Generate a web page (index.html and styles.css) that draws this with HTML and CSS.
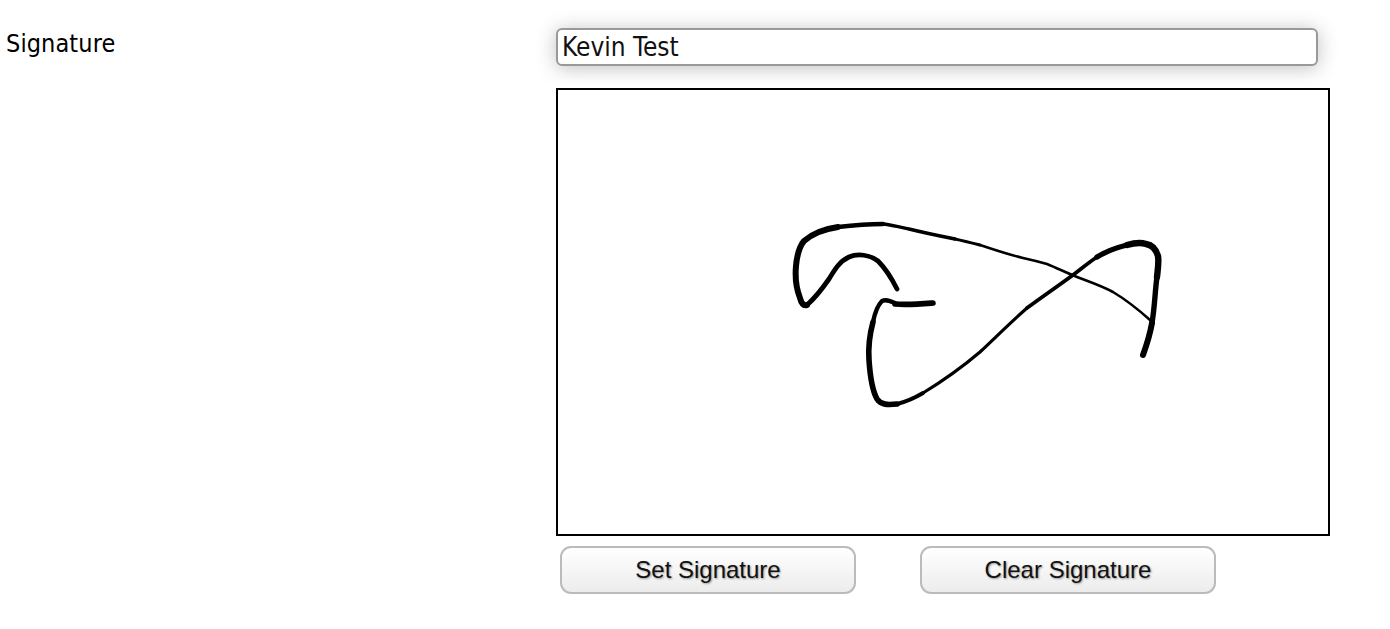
FILE: index.html
```html
<!DOCTYPE html>
<html lang="en">
<head>
    <meta charset="UTF-8">
    <title>Signature</title>
    <link rel="stylesheet" href="styles.css">
</head>
<body>
    <div class="signature-row">
        <label class="signature-label" for="signatureName">Signature</label>
        <div class="signature-field">
            <input class="signature-input" type="text" id="signatureName" value="Kevin Test">
            <div class="signature-pad">
                <svg class="signature-ink" width="770" height="444" viewBox="558 90 770 444" fill="none" stroke="#000" stroke-linecap="round" stroke-linejoin="round">
                    <!-- thick start of the pen stroke -->
                    <path stroke-width="4.8" d="M897 289 C892 279 886 269 878 261 C870 255 858 253 849 257 C840 261 835 269 829 279 C822 289 815 298 807 305"/>
                    <path stroke-width="6" d="M807 305 C803 306 801 302 800 298 C796 288 795 277 796 266 C797 255 799 247 804 241 C812 234 824 229 838 227"/>
                    <path stroke-width="4.4" d="M838 227 C855 225 870 224 883 224"/>
                    <path stroke-width="3.4" d="M883 224 C892 225 900 227 909 229 C925 233 940 236 955 239"/>
                    <path stroke-width="3" d="M955 239 C964 241 972 243 980 245"/>
                    <path stroke-width="2.6" d="M980 245 C995 250 1010 255 1023 258 C1032 260 1040 262 1047 264 C1057 268 1067 273 1077 277 C1090 282 1102 286 1113 292 C1128 301 1140 311 1150 320"/>
                    <path stroke-width="6" d="M1143 355 C1147 344 1150 334 1152 323"/>
                    <path stroke-width="5.4" d="M1152 323 C1155 305 1155 290 1157 277"/>
                    <path stroke-width="6.4" d="M1157 277 C1158 268 1159 262 1158 256 C1156 249 1152 245 1146 244 C1140 242 1134 243 1127 245"/>
                    <path stroke-width="5.4" d="M1127 245 C1115 248 1105 252 1097 257"/>
                    <path stroke-width="3.8" d="M1097 257 C1088 263 1081 269 1073 275 C1058 286 1042 297 1027 308"/>
                    <path stroke-width="3.2" d="M1027 308 C1011 322 995 338 980 352 C960 369 941 382 923 393"/>
                    <path stroke-width="4" d="M923 393 C913 399 905 402 897 404"/>
                    <path stroke-width="5.6" d="M897 404 C888 405 881 405 877 399 C872 390 870 375 869 360 C868 345 870 333 873 322"/>
                    <path stroke-width="4.4" d="M873 322 C875 312 878 305 882 301 C886 299 890 301 895 303"/>
                    <path stroke-width="5.6" d="M895 304 C908 305 920 304 933 303"/>
                </svg>
            </div>
            <div class="signature-actions">
                <button class="signature-button" type="button">Set Signature</button>
                <button class="signature-button" type="button">Clear Signature</button>
            </div>
        </div>
    </div>
</body>
</html>
```

FILE: styles.css
```css
body {
    margin: 0;
    background: #fff;
    color: #000;
    font-family: "DejaVu Sans", Verdana, sans-serif;
    font-stretch: condensed;
}

.signature-row {
    display: flex;
    padding-top: 28px;
}

.signature-label {
    width: 550px;
    padding-left: 6px;
    font-size: 25px;
    line-height: 32px;
    letter-spacing: 0.1px;
}

.signature-field {
    display: flex;
    flex-direction: column;
    align-items: flex-start;
}

.signature-input {
    box-sizing: border-box;
    width: 762px;
    height: 38px;
    padding: 0 4px;
    border: 2px solid #999;
    border-radius: 6px;
    box-shadow: 0 2px 20px rgba(0,0,0,0.25);
    font-family: "DejaVu Sans", Verdana, sans-serif;
    font-stretch: condensed;
    font-size: 26px;
    color: #111;
    outline: none;
}

.signature-pad {
    box-sizing: border-box;
    width: 774px;
    height: 448px;
    margin-top: 22px;
    border: 2px solid #000;
    background: #fff;
}

.signature-ink {
    display: block;
}

.signature-actions {
    display: flex;
    gap: 64px;
    margin: 10px 0 0 4px;
}

.signature-button {
    box-sizing: border-box;
    width: 296px;
    height: 48px;
    padding-bottom: 2px;
    border: 2px solid #bbb;
    border-radius: 11px;
    background: linear-gradient(to bottom, #fff, #ececec);
    font-family: "Liberation Sans", Arial, sans-serif;
    font-size: 24px;
    color: #111;
    text-shadow: 1px 1px 2px #999;
}
```
